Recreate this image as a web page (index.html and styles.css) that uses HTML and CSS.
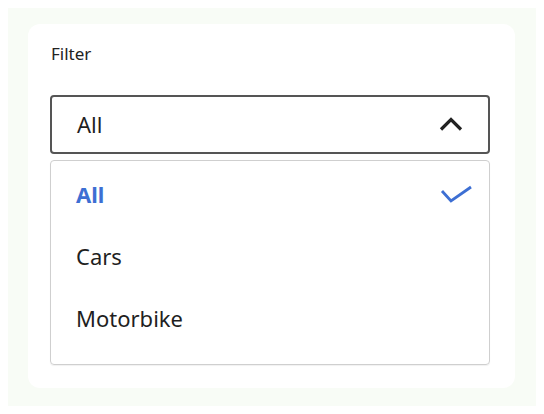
FILE: index.html
```html
<!DOCTYPE html>
<html lang="en">
<head>
<meta charset="utf-8">
<link rel="stylesheet" href="styles.css">
</head>
<body>
<div class="frame">
  <div class="card">
    <div class="label">Filter</div>
    <div class="select">
      <span class="select-value">All</span>
      <svg class="chevron" width="26" height="16" viewBox="0 0 26 16"><path d="M2 13.5 L12 3.5 L22 13.5" fill="none" stroke="#222" stroke-width="3.2"/></svg>
    </div>
    <ul class="menu">
      <li class="option selected"><span>All</span>
        <svg class="check" width="34" height="24" viewBox="0 0 34 24"><path d="M2 8 L11 18 L31 4" fill="none" stroke="#3d6fd3" stroke-width="2.8"/></svg>
      </li>
      <li class="option"><span>Cars</span></li>
      <li class="option"><span>Motorbike</span></li>
    </ul>
  </div>
</div>
</body>
</html>
```

FILE: styles.css
```css
html, body {
  background: #ffffff;
}
body {
  margin: 8px;
  font-family: "Noto Sans", "Open Sans", sans-serif;
  color: #1f1f1f;
}
.frame {
  height: 398px;
  background: #f8fcf6;
  padding: 16px 21px 18px 20px;
  box-sizing: border-box;
}
.card {
  height: 364px;
  background: #ffffff;
  border-radius: 12px;
  padding: 18px 22px 0 22px;
  box-sizing: border-box;
}
.label {
  font-size: 17px;
  line-height: 24px;
  padding-left: 1px;
  color: #222;
  margin-bottom: 29px;
}
.select {
  width: 440px;
  height: 59px;
  box-sizing: border-box;
  border: 2px solid #555;
  border-radius: 4px;
  display: flex;
  align-items: center;
  justify-content: space-between;
  padding: 0 23px 0 25px;
  font-size: 22px;
}
.select-value {
  margin-top: -2px;
}
.chevron {
  display: block;
  margin-top: -2px;
}
.menu {
  list-style: none;
  margin: 6px 0 0 0;
  width: 440px;
  height: 205px;
  box-sizing: border-box;
  border: 1px solid #cfcfcf;
  border-radius: 4px;
  padding: 2px 15px 0 25px;
  box-shadow: 0 1px 1px rgba(0,0,0,0.06);
}
.option {
  height: 62px;
  display: flex;
  align-items: center;
  justify-content: space-between;
  font-size: 22px;
  color: #1f1f1f;
}
.option.selected {
  color: #3d6fd3;
  font-weight: 700;
}
.check {
  display: block;
  margin-top: 2px;
}
```
